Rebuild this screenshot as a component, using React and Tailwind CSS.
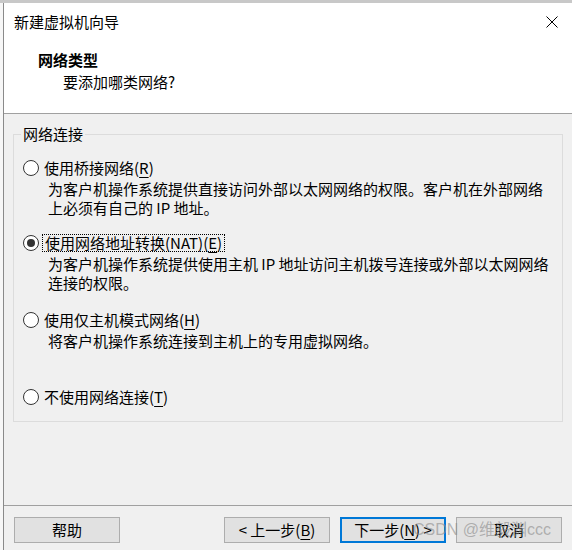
const FONT = "font-['Noto_Sans_CJK_SC','Microsoft_YaHei',sans-serif]";

function Radio({ checked }) {
  return (
    <span className="w-[16px] h-[16px] shrink-0 rounded-full border border-[#333333] bg-white flex items-center justify-center">
      {checked && <span className="w-[8px] h-[8px] rounded-full bg-[#333333]" />}
    </span>
  );
}

function Mnemonic({ text, keyChar }) {
  return (
    <>
      {text}(<span className="underline underline-offset-[3px] decoration-1">{keyChar}</span>)
    </>
  );
}

function Option({ label, keyChar, suffix, checked, focused, lines, className = '' }) {
  return (
    <div className={className}>
      <div className="flex items-center h-[20px]">
        <Radio checked={checked} />
        {focused ? (
          <span className="ml-[3px] h-[18px] flex items-center px-[2px] border border-dotted border-black leading-[16px]">
            <Mnemonic text={label} keyChar={keyChar} />
            {suffix}
          </span>
        ) : (
          <span className="ml-[5px]">
            <Mnemonic text={label} keyChar={keyChar} />
            {suffix}
          </span>
        )}
      </div>
      {lines && (
        <div className="pl-[25px] mt-[1px] leading-[19px] whitespace-nowrap">
          {lines.map((l, i) => (
            <div key={i}>{l}</div>
          ))}
        </div>
      )}
    </div>
  );
}

function Button({ children, primary, className = '' }) {
  return (
    <button
      className={`h-[26px] w-[106px] flex items-center justify-center bg-[#e1e1e1] text-[15px] leading-[20px] text-black ${
        primary ? 'border-2 border-[#0078d7]' : 'border border-[#adadad]'
      } ${className}`}
    >
      {children}
    </button>
  );
}

export default function App() {
  return (
    <div className={`relative w-[572px] h-[550px] overflow-hidden bg-white flex flex-col text-[15px] leading-[20px] text-black ${FONT}`}>
      {/* screenshot edge */}
      <div className="h-[3px] bg-[#c8c8c8]" />
      <div className="flex-1 flex">
        <div className="w-[3px] bg-[#f7f7f7]" />
        <div className="flex-1 flex flex-col border-l border-[#8a8a8a]">
          {/* Header */}
          <div className="h-[111px] bg-white border-b border-[#a0a0a0]">
            <div className="h-[38px] flex items-center justify-between pl-[10px] pr-[14px]">
              <span>新建虚拟机向导</span>
              <svg width="12" height="12" viewBox="0 0 12 12" className="block">
                <path d="M0.5 0.5 L11.5 11.5 M11.5 0.5 L0.5 11.5" stroke="#000" strokeWidth="1" fill="none" />
              </svg>
            </div>
            <div className="pl-[34px] mt-[9px] font-bold">网络类型</div>
            <div className="pl-[59px] mt-[2px]">要添加哪类网络?</div>
          </div>

          {/* Body */}
          <div className="h-[392px] bg-[#f0f0f0] border-b border-[#a0a0a0] pt-[10px]">
            <fieldset className="ml-[9px] w-[550px] border border-[#dcdcdc] pl-[7px] pt-[14px] pb-[14px]">
              <legend className="px-[2px] leading-[20px]">网络连接</legend>
              <div className="pl-[2px]">
                <Option
                  label="使用桥接网络"
                  keyChar="R"
                  lines={['为客户机操作系统提供直接访问外部以太网网络的权限。客户机在外部网络', '上必须有自己的 IP 地址。']}
                />
                <Option
                  className="mt-[16px]"
                  label="使用网络地址转换(NAT)"
                  keyChar="E"
                  checked
                  focused
                  lines={['为客户机操作系统提供使用主机 IP 地址访问主机拨号连接或外部以太网网络', '连接的权限。']}
                />
                <Option
                  className="mt-[18px]"
                  label="使用仅主机模式网络"
                  keyChar="H"
                  lines={['将客户机操作系统连接到主机上的专用虚拟网络。']}
                />
                <Option className="mt-[37px]" label="不使用网络连接" keyChar="T" />
              </div>
            </fieldset>
          </div>

          {/* Footer */}
          <div className="flex-1 bg-[#f0f0f0] flex items-start pl-[10px] pt-[11px]">
            <Button>帮助</Button>
            <Button className="ml-[104px]">
              &lt; 上一步(<span className="underline underline-offset-[3px] decoration-1">B</span>)
            </Button>
            <Button primary className="ml-[10px]">
              下一步(<span className="underline underline-offset-[3px] decoration-1">N</span>) &gt;
            </Button>
            <Button className="ml-[10px]">取消</Button>
          </div>
        </div>
      </div>

      {/* watermark */}
      <div className="absolute left-[413px] top-[519px] text-[16px] leading-[22px] text-[#8a8a8a]/60 font-['Liberation_Sans','Noto_Sans_CJK_SC',sans-serif] pointer-events-none whitespace-nowrap">
        CSDN @维毅渊ccc
      </div>
    </div>
  );
}
